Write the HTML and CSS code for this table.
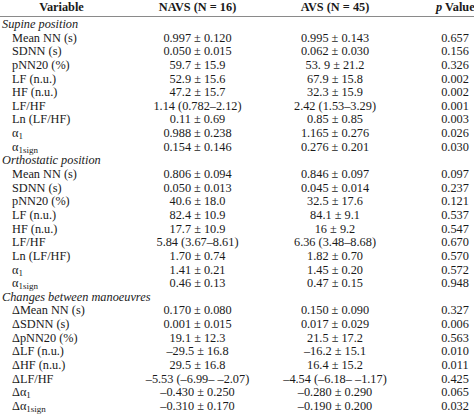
FILE: index.html
```html
<!DOCTYPE html>
<html>
<head>
<meta charset="utf-8">
<link rel="stylesheet" href="styles.css">
</head>
<body>
<div class="table">
  <div class="row head">
    <div class="c var">Variable</div>
    <div class="c">NAVS (N = 16)</div>
    <div class="c">AVS (N = 45)</div>
    <div class="c p"><i>p</i> Value</div>
  </div>

  <div class="row section"><div class="c sec">Supine position</div></div>
  <div class="row"><div class="c lab">Mean NN (s)</div><div class="c">0.997 ± 0.120</div><div class="c">0.995 ± 0.143</div><div class="c p">0.657</div></div>
  <div class="row"><div class="c lab">SDNN (s)</div><div class="c">0.050 ± 0.015</div><div class="c">0.062 ± 0.030</div><div class="c p">0.156</div></div>
  <div class="row"><div class="c lab">pNN20 (%)</div><div class="c">59.7 ± 15.9</div><div class="c">53. 9 ± 21.2</div><div class="c p">0.326</div></div>
  <div class="row"><div class="c lab">LF (n.u.)</div><div class="c">52.9 ± 15.6</div><div class="c">67.9 ± 15.8</div><div class="c p">0.002</div></div>
  <div class="row"><div class="c lab">HF (n.u.)</div><div class="c">47.2 ± 15.7</div><div class="c">32.3 ± 15.9</div><div class="c p">0.002</div></div>
  <div class="row"><div class="c lab">LF/HF</div><div class="c">1.14 (0.782–2.12)</div><div class="c">2.42 (1.53–3.29)</div><div class="c p">0.001</div></div>
  <div class="row"><div class="c lab">Ln (LF/HF)</div><div class="c">0.11 ± 0.69</div><div class="c">0.85 ± 0.85</div><div class="c p">0.003</div></div>
  <div class="row"><div class="c lab">α<sub>1</sub></div><div class="c">0.988 ± 0.238</div><div class="c">1.165 ± 0.276</div><div class="c p">0.026</div></div>
  <div class="row"><div class="c lab">α<sub>1sign</sub></div><div class="c">0.154 ± 0.146</div><div class="c">0.276 ± 0.201</div><div class="c p">0.030</div></div>

  <div class="row section"><div class="c sec">Orthostatic position</div></div>
  <div class="row"><div class="c lab">Mean NN (s)</div><div class="c">0.806 ± 0.094</div><div class="c">0.846 ± 0.097</div><div class="c p">0.097</div></div>
  <div class="row"><div class="c lab">SDNN (s)</div><div class="c">0.050 ± 0.013</div><div class="c">0.045 ± 0.014</div><div class="c p">0.237</div></div>
  <div class="row"><div class="c lab">pNN20 (%)</div><div class="c">40.6 ± 18.0</div><div class="c">32.5 ± 17.6</div><div class="c p">0.121</div></div>
  <div class="row"><div class="c lab">LF (n.u.)</div><div class="c">82.4 ± 10.9</div><div class="c">84.1 ± 9.1</div><div class="c p">0.537</div></div>
  <div class="row"><div class="c lab">HF (n.u.)</div><div class="c">17.7 ± 10.9</div><div class="c">16 ± 9.2</div><div class="c p">0.547</div></div>
  <div class="row"><div class="c lab">LF/HF</div><div class="c">5.84 (3.67–8.61)</div><div class="c">6.36 (3.48–8.68)</div><div class="c p">0.670</div></div>
  <div class="row"><div class="c lab">Ln (LF/HF)</div><div class="c">1.70 ± 0.74</div><div class="c">1.82 ± 0.70</div><div class="c p">0.570</div></div>
  <div class="row"><div class="c lab">α<sub>1</sub></div><div class="c">1.41 ± 0.21</div><div class="c">1.45 ± 0.20</div><div class="c p">0.572</div></div>
  <div class="row"><div class="c lab">α<sub>1sign</sub></div><div class="c">0.46 ± 0.13</div><div class="c">0.47 ± 0.15</div><div class="c p">0.948</div></div>

  <div class="row section"><div class="c sec">Changes between manoeuvres</div></div>
  <div class="row"><div class="c lab">ΔMean NN (s)</div><div class="c">0.170 ± 0.080</div><div class="c">0.150 ± 0.090</div><div class="c p">0.327</div></div>
  <div class="row"><div class="c lab">ΔSDNN (s)</div><div class="c">0.001 ± 0.015</div><div class="c">0.017 ± 0.029</div><div class="c p">0.006</div></div>
  <div class="row"><div class="c lab">ΔpNN20 (%)</div><div class="c">19.1 ± 12.3</div><div class="c">21.5 ± 17.2</div><div class="c p">0.563</div></div>
  <div class="row"><div class="c lab">ΔLF (n.u.)</div><div class="c">–29.5 ± 16.8</div><div class="c">–16.2 ± 15.1</div><div class="c p">0.010</div></div>
  <div class="row"><div class="c lab">ΔHF (n.u.)</div><div class="c">29.5 ± 16.8</div><div class="c">16.4 ± 15.2</div><div class="c p">0.011</div></div>
  <div class="row"><div class="c lab">ΔLF/HF</div><div class="c">–5.53 (–6.99– –2.07)</div><div class="c">–4.54 (–6.18– –1.17)</div><div class="c p">0.425</div></div>
  <div class="row"><div class="c lab">Δα<sub>1</sub></div><div class="c">–0.430 ± 0.250</div><div class="c">–0.280 ± 0.290</div><div class="c p">0.065</div></div>
  <div class="row"><div class="c lab">Δα<sub>1sign</sub></div><div class="c">–0.310 ± 0.170</div><div class="c">–0.190 ± 0.200</div><div class="c p">0.032</div></div>
</div>
</body>
</html>
```
FILE: styles.css
```css
html, body {
  margin: 0;
  padding: 0;
  background: #ffffff;
  overflow: hidden;
}

body {
  font-family: "Liberation Serif", "Times New Roman", serif;
  font-size: 12.3px;
  color: #1a1a1a;
}

.table {
  width: 474px;
}

.row {
  display: grid;
  grid-template-columns: 125px 145px 130px 74px;
  height: 13.65px;
  line-height: 13.65px;
}

.row.head {
  height: 16px;
  line-height: 15px;
  font-weight: bold;
  border-bottom: 1px solid #8a8a8a;
  margin-bottom: 1px;
}

.c {
  text-align: center;
  white-space: nowrap;
}

.c.p {
  padding-left: 36px;
}

.head .var {
  padding-right: 2px;
}

.lab {
  text-align: left;
  padding-left: 12px;
}

.sec {
  text-align: left;
  font-style: italic;
  padding-left: 2px;
  grid-column: 1 / -1;
}

sub {
  font-size: 9px;
  line-height: 0;
  vertical-align: -2px;
}
```
